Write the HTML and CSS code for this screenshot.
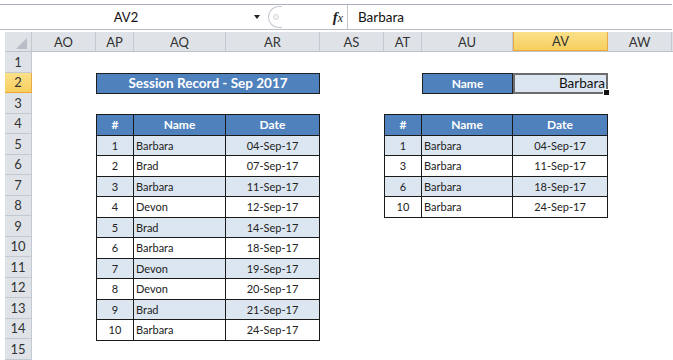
FILE: index.html
```html
<!DOCTYPE html>
<html>
<head>
<meta charset="utf-8">
<link rel="stylesheet" href="styles.css">
</head>
<body>
<div class="app">
  <div class="top">
    <div class="fbar">
      <div class="namebox"><span class="nb-text">AV2</span><span class="nb-arrow"></span></div>
      <div class="fbtns"><span class="grip"><span class="grip-dot"></span></span><span class="fx"><i>f</i><span class="fx-x">x</span></span></div>
      <div class="finput">Barbara</div>
    </div>
  </div>
  <div class="colhead">
    <div class="corner"><svg width="27" height="20" viewBox="0 0 27 20"><polygon points="11,17 22,17 22,6" fill="#b7bec8"/></svg></div>
    <div class="ch w64">AO</div>
    <div class="ch w38">AP</div>
    <div class="ch w92">AQ</div>
    <div class="ch w94">AR</div>
    <div class="ch w64">AS</div>
    <div class="ch w38">AT</div>
    <div class="ch w91">AU</div>
    <div class="ch w95 sel">AV</div>
    <div class="ch w64">AW</div>
  </div>
  <div class="body">
    <div class="rowhead">
      <div class="rh">1</div>
      <div class="rh sel">2</div>
      <div class="rh">3</div>
      <div class="rh">4</div>
      <div class="rh">5</div>
      <div class="rh">6</div>
      <div class="rh">7</div>
      <div class="rh">8</div>
      <div class="rh">9</div>
      <div class="rh">10</div>
      <div class="rh">11</div>
      <div class="rh">12</div>
      <div class="rh">13</div>
      <div class="rh">14</div>
      <div class="rh">15</div>
    </div>
    <div class="sheet">
      <div class="left">
        <div class="title">Session Record - Sep 2017</div>
        <div class="spacer"></div>
        <div class="tbl">
          <div class="tr hdr"><div class="c num">#</div><div class="c ctr">Name</div><div class="c ctr">Date</div></div>
          <div class="tr alt"><div class="c num">1</div><div class="c">Barbara</div><div class="c ctr">04-Sep-17</div></div>
          <div class="tr"><div class="c num">2</div><div class="c">Brad</div><div class="c ctr">07-Sep-17</div></div>
          <div class="tr alt"><div class="c num">3</div><div class="c">Barbara</div><div class="c ctr">11-Sep-17</div></div>
          <div class="tr"><div class="c num">4</div><div class="c">Devon</div><div class="c ctr">12-Sep-17</div></div>
          <div class="tr alt"><div class="c num">5</div><div class="c">Brad</div><div class="c ctr">14-Sep-17</div></div>
          <div class="tr"><div class="c num">6</div><div class="c">Barbara</div><div class="c ctr">18-Sep-17</div></div>
          <div class="tr alt"><div class="c num">7</div><div class="c">Devon</div><div class="c ctr">19-Sep-17</div></div>
          <div class="tr"><div class="c num">8</div><div class="c">Devon</div><div class="c ctr">20-Sep-17</div></div>
          <div class="tr alt"><div class="c num">9</div><div class="c">Brad</div><div class="c ctr">21-Sep-17</div></div>
          <div class="tr"><div class="c num">10</div><div class="c">Barbara</div><div class="c ctr">24-Sep-17</div></div>
        </div>
      </div>
      <div class="right">
        <div class="lookup">
          <div class="empty"></div>
          <div class="lk-label">Name</div>
          <div class="lk-value">Barbara</div>
        </div>
        <div class="spacer"></div>
        <div class="tbl tbl-r">
          <div class="tr hdr"><div class="c num">#</div><div class="c ctr">Name</div><div class="c ctr">Date</div></div>
          <div class="tr alt"><div class="c num">1</div><div class="c">Barbara</div><div class="c ctr">04-Sep-17</div></div>
          <div class="tr"><div class="c num">3</div><div class="c">Barbara</div><div class="c ctr">11-Sep-17</div></div>
          <div class="tr alt"><div class="c num">6</div><div class="c">Barbara</div><div class="c ctr">18-Sep-17</div></div>
          <div class="tr"><div class="c num">10</div><div class="c">Barbara</div><div class="c ctr">24-Sep-17</div></div>
        </div>
      </div>
    </div>
  </div>
</div>
</body>
</html>
```
FILE: styles.css
```css
* { box-sizing: border-box; }
body { margin: 0; background: #fff; font-family: Lato, "Open Sans", sans-serif; color: #222; }
.app { width: 673px; height: 360px; overflow: hidden; }

.top { height: 32px; padding-top: 4px; }
.fbar { display: flex; width: 672px; height: 26px; border-top: 1px solid #a9b0ba; border-bottom: 1px solid #b5bcc6; }
.namebox { width: 268px; display: flex; align-items: center; }
.nb-text { width: 252px; text-align: center; font-size: 13px; color: #111; }
.nb-arrow { width: 0; height: 0; border-left: 3.5px solid transparent; border-right: 3.5px solid transparent; border-top: 4px solid #222; margin-left: 2px; }
.fbtns { width: 79px; display: flex; align-items: center; }
.grip { width: 14px; height: 22px; border: 1px solid #c6cbd2; border-right: none; border-radius: 11px 0 0 11px; display: flex; align-items: center; padding-left: 4px; }
.grip-dot { width: 6px; height: 6px; border-radius: 50%; border: 1px solid #d3d7dc; background: #f3f4f6; }
.fx { margin-left: auto; margin-right: 4px; font-family: "Liberation Serif", serif; font-size: 15px; color: #222; }
.fx i { font-style: italic; font-weight: 700; }
.fx-x { font-style: italic; font-size: 12px; }
.finput { flex: 1; border-left: 1px solid #c3c8cf; padding-left: 10px; font-size: 13.5px; line-height: 24px; color: #111; }

.colhead { display: flex; margin-left: 5px; height: 20px; background: #dfe3e8; border-bottom: 1px solid #bcc3cc; }
.corner { width: 27px; border-right: 1px solid #c3c9d1; }
.corner svg { display: block; }
.ch { display: flex; align-items: center; justify-content: center; border-right: 1px solid #c3c9d1; font-size: 13px; color: #333; }
.ch.sel { background: linear-gradient(#fbe08a, #f7cf5e); border-left: 1px solid #e9aa45; border-right: 1px solid #e9aa45; border-bottom: 1px solid #f0a830; }
.w64 { width: 64px; }
.w38 { width: 38px; }
.w92 { width: 92px; }
.w94 { width: 94px; }
.w91 { width: 91px; }
.w95 { width: 95px; }

.body { display: flex; margin-left: 5px; }
.rowhead { width: 27px; display: flex; flex-direction: column; }
.rh { height: 20.5px; display: flex; align-items: center; justify-content: center; background: #dfe3e8; border-bottom: 1px solid #c3c9d1; border-right: 1px solid #c3c9d1; font-size: 13px; color: #333; }
.rh.sel { background: linear-gradient(#fbe08a, #f7cf5e); border-bottom: 1px solid #f0a830; border-right: 1px solid #e9aa45; }

.sheet { display: grid; grid-template-columns: 64px 38px 92px 94px 64px 38px 91px 95px 64px; grid-template-rows: repeat(15, 20.5px); }
.left { grid-column: 2 / 5; grid-row: 2 / 15; display: flex; flex-direction: column; }
.right { grid-column: 6 / 9; grid-row: 2 / 9; display: flex; flex-direction: column; }
.spacer { height: 20.5px; flex: none; }

.title { height: 21px; flex: none; background: #4f81bd; border: 1px solid #1f1f1f; color: #fff; font-weight: 700; font-size: 13.5px; display: flex; align-items: center; justify-content: center; }

.tbl { border-left: 1px solid #1a1a1a; border-top: 1px solid #1a1a1a; }
.tr { display: grid; grid-template-columns: 37px 92px 94px; height: 20.5px; }
.tbl-r .tr { grid-template-columns: 37px 91px 95px; }
.tr.alt { background: #dce6f1; }
.tr.hdr { background: #4f81bd; color: #fff; font-weight: 700; }
.c { display: flex; align-items: center; padding: 0 2px; border-right: 1px solid #1a1a1a; border-bottom: 1px solid #1a1a1a; font-size: 11px; white-space: nowrap; }
.tr.hdr .c { font-size: 12px; }
.num, .ctr { justify-content: center; }

.lookup { display: grid; grid-template-columns: 38px 91px 95px; height: 21px; flex: none; }
.lk-label { background: #4f81bd; border: 1px solid #1f1f1f; color: #fff; font-weight: 700; font-size: 12px; display: flex; align-items: center; justify-content: center; }
.lk-value { position: relative; background: #dce6f1; border: 2px solid #6d6d6d; font-size: 13.5px; color: #111; display: flex; align-items: center; justify-content: flex-end; padding-right: 1px; }
.lk-value::after { content: ""; position: absolute; right: -4px; bottom: -4px; width: 5px; height: 5px; background: #111; border: 1px solid #fff; }
```
